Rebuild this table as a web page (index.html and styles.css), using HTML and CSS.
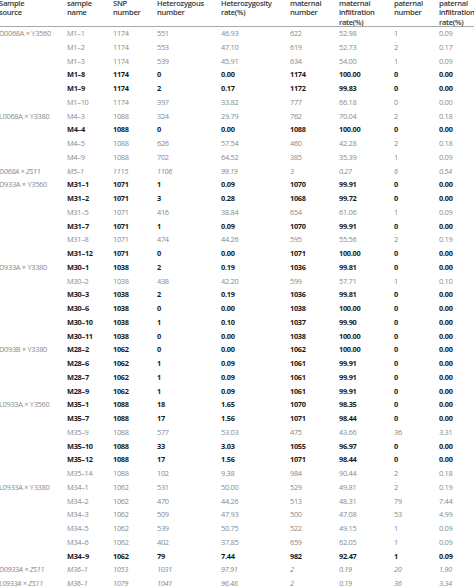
FILE: index.html
```html
<!DOCTYPE html>
<html>
<head>
<meta charset="utf-8">
<link rel="stylesheet" href="styles.css">
</head>
<body>
<div class="table">
  <div class="head">
    <div class="c1">Sample<br>source</div>
    <div>sample<br>name</div>
    <div>SNP<br>number</div>
    <div>Heterozygous<br>number</div>
    <div>Heterozygosity<br>rate(%)</div>
    <div>maternal<br>number</div>
    <div>maternal<br>infiltration<br>rate(%)</div>
    <div>paternal<br>number</div>
    <div>paternal<br>infiltration<br>rate(%)</div>
  </div>

  <div class="row"><div class="c1">D0068A × Y3560</div><div>M1–1</div><div>1174</div><div>551</div><div>46.93</div><div>622</div><div>52.98</div><div>1</div><div>0.09</div></div>
  <div class="row"><div class="c1"></div><div>M1–2</div><div>1174</div><div>553</div><div>47.10</div><div>619</div><div>52.73</div><div>2</div><div>0.17</div></div>
  <div class="row"><div class="c1"></div><div>M1–3</div><div>1174</div><div>539</div><div>45.91</div><div>634</div><div>54.00</div><div>1</div><div>0.09</div></div>
  <div class="row b"><div class="c1"></div><div>M1–8</div><div>1174</div><div>0</div><div>0.00</div><div>1174</div><div>100.00</div><div>0</div><div>0.00</div></div>
  <div class="row b"><div class="c1"></div><div>M1–9</div><div>1174</div><div>2</div><div>0.17</div><div>1172</div><div>99.83</div><div>0</div><div>0.00</div></div>
  <div class="row"><div class="c1"></div><div>M1–10</div><div>1174</div><div>397</div><div>33.82</div><div>777</div><div>66.18</div><div>0</div><div>0.00</div></div>
  <div class="row"><div class="c1">L0068A × Y3380</div><div>M4–3</div><div>1088</div><div>324</div><div>29.79</div><div>762</div><div>70.04</div><div>2</div><div>0.18</div></div>
  <div class="row b"><div class="c1"></div><div>M4–4</div><div>1088</div><div>0</div><div>0.00</div><div>1088</div><div>100.00</div><div>0</div><div>0.00</div></div>
  <div class="row"><div class="c1"></div><div>M4–5</div><div>1088</div><div>626</div><div>57.54</div><div>460</div><div>42.28</div><div>2</div><div>0.18</div></div>
  <div class="row"><div class="c1"></div><div>M4–9</div><div>1088</div><div>702</div><div>64.52</div><div>385</div><div>35.39</div><div>1</div><div>0.09</div></div>
  <div class="row i"><div class="c1">D068A × ZS11</div><div>M5–1</div><div>1115</div><div>1106</div><div>99.19</div><div>3</div><div>0.27</div><div>6</div><div>0.54</div></div>
  <div class="row b"><div class="c1">D933A × Y3560</div><div>M31–1</div><div>1071</div><div>1</div><div>0.09</div><div>1070</div><div>99.91</div><div>0</div><div>0.00</div></div>
  <div class="row b"><div class="c1"></div><div>M31–2</div><div>1071</div><div>3</div><div>0.28</div><div>1068</div><div>99.72</div><div>0</div><div>0.00</div></div>
  <div class="row"><div class="c1"></div><div>M31–5</div><div>1071</div><div>416</div><div>38.84</div><div>654</div><div>61.06</div><div>1</div><div>0.09</div></div>
  <div class="row b"><div class="c1"></div><div>M31–7</div><div>1071</div><div>1</div><div>0.09</div><div>1070</div><div>99.91</div><div>0</div><div>0.00</div></div>
  <div class="row"><div class="c1"></div><div>M31–8</div><div>1071</div><div>474</div><div>44.26</div><div>595</div><div>55.56</div><div>2</div><div>0.19</div></div>
  <div class="row b"><div class="c1"></div><div>M31–12</div><div>1071</div><div>0</div><div>0.00</div><div>1071</div><div>100.00</div><div>0</div><div>0.00</div></div>
  <div class="row b"><div class="c1">D933A × Y3380</div><div>M30–1</div><div>1038</div><div>2</div><div>0.19</div><div>1036</div><div>99.81</div><div>0</div><div>0.00</div></div>
  <div class="row"><div class="c1"></div><div>M30–2</div><div>1038</div><div>438</div><div>42.20</div><div>599</div><div>57.71</div><div>1</div><div>0.10</div></div>
  <div class="row b"><div class="c1"></div><div>M30–3</div><div>1038</div><div>2</div><div>0.19</div><div>1036</div><div>99.81</div><div>0</div><div>0.00</div></div>
  <div class="row b"><div class="c1"></div><div>M30–6</div><div>1038</div><div>0</div><div>0.00</div><div>1038</div><div>100.00</div><div>0</div><div>0.00</div></div>
  <div class="row b"><div class="c1"></div><div>M30–10</div><div>1038</div><div>1</div><div>0.10</div><div>1037</div><div>99.90</div><div>0</div><div>0.00</div></div>
  <div class="row b"><div class="c1"></div><div>M30–11</div><div>1038</div><div>0</div><div>0.00</div><div>1038</div><div>100.00</div><div>0</div><div>0.00</div></div>
  <div class="row b"><div class="c1">D093B × Y3380</div><div>M28–2</div><div>1062</div><div>0</div><div>0.00</div><div>1062</div><div>100.00</div><div>0</div><div>0.00</div></div>
  <div class="row b"><div class="c1"></div><div>M28–6</div><div>1062</div><div>1</div><div>0.09</div><div>1061</div><div>99.91</div><div>0</div><div>0.00</div></div>
  <div class="row b"><div class="c1"></div><div>M28–7</div><div>1062</div><div>1</div><div>0.09</div><div>1061</div><div>99.91</div><div>0</div><div>0.00</div></div>
  <div class="row b"><div class="c1"></div><div>M28–9</div><div>1062</div><div>1</div><div>0.09</div><div>1061</div><div>99.91</div><div>0</div><div>0.00</div></div>
  <div class="row b"><div class="c1">L0933A × Y3560</div><div>M35–1</div><div>1088</div><div>18</div><div>1.65</div><div>1070</div><div>98.35</div><div>0</div><div>0.00</div></div>
  <div class="row b"><div class="c1"></div><div>M35–7</div><div>1088</div><div>17</div><div>1.56</div><div>1071</div><div>98.44</div><div>0</div><div>0.00</div></div>
  <div class="row"><div class="c1"></div><div>M35–9</div><div>1088</div><div>577</div><div>53.03</div><div>475</div><div>43.66</div><div>36</div><div>3.31</div></div>
  <div class="row b"><div class="c1"></div><div>M35–10</div><div>1088</div><div>33</div><div>3.03</div><div>1055</div><div>96.97</div><div>0</div><div>0.00</div></div>
  <div class="row b"><div class="c1"></div><div>M35–12</div><div>1088</div><div>17</div><div>1.56</div><div>1071</div><div>98.44</div><div>0</div><div>0.00</div></div>
  <div class="row"><div class="c1"></div><div>M35–14</div><div>1088</div><div>102</div><div>9.38</div><div>984</div><div>90.44</div><div>2</div><div>0.18</div></div>
  <div class="row"><div class="c1">L0933A × Y3380</div><div>M34–1</div><div>1062</div><div>531</div><div>50.00</div><div>529</div><div>49.81</div><div>2</div><div>0.19</div></div>
  <div class="row"><div class="c1"></div><div>M34–2</div><div>1062</div><div>470</div><div>44.26</div><div>513</div><div>48.31</div><div>79</div><div>7.44</div></div>
  <div class="row"><div class="c1"></div><div>M34–3</div><div>1062</div><div>509</div><div>47.93</div><div>500</div><div>47.08</div><div>53</div><div>4.99</div></div>
  <div class="row"><div class="c1"></div><div>M34–5</div><div>1062</div><div>539</div><div>50.75</div><div>522</div><div>49.15</div><div>1</div><div>0.09</div></div>
  <div class="row"><div class="c1"></div><div>M34–6</div><div>1062</div><div>402</div><div>37.85</div><div>659</div><div>62.05</div><div>1</div><div>0.09</div></div>
  <div class="row b"><div class="c1"></div><div>M34–9</div><div>1062</div><div>79</div><div>7.44</div><div>982</div><div>92.47</div><div>1</div><div>0.09</div></div>
  <div class="row i"><div class="c1">D0933A × ZS11</div><div>M36–1</div><div>1053</div><div>1031</div><div>97.91</div><div>2</div><div>0.19</div><div>20</div><div>1.90</div></div>
  <div class="row i"><div class="c1">L0933A × ZS11</div><div>M36–1</div><div>1079</div><div>1041</div><div>96.48</div><div>2</div><div>0.19</div><div>36</div><div>3.34</div></div>
</div>
</body>
</html>
```

FILE: styles.css
```css
html, body {
  margin: 0;
  padding: 0;
  background: #ffffff;
}
body {
  width: 474px;
  height: 588px;
  overflow: hidden;
  font-family: "Open Sans", "Liberation Sans", sans-serif;
  font-size: 7.4px;
  letter-spacing: -0.3px;
  color: #8a8a8a;
}
.table {
  margin-left: -1px;
  margin-top: -1px;
  width: 540px;
}
.head,
.row {
  display: grid;
  grid-template-columns: 68px 46px 44px 64px 69px 49px 55px 45px 100px;
  white-space: nowrap;
}
.head {
  height: 27px;
  line-height: 9.3px;
  font-size: 7.6px;
  font-weight: 600;
  color: #383838;
  border-bottom: 1px solid #a8a8a8;
  align-items: start;
}
.row {
  height: 13.75px;
  line-height: 13.75px;
  align-items: center;
}
.row.b > div {
  font-weight: 700;
  color: #1a1a1a;
}
.row.i > div {
  font-style: italic;
}
.row > .c1,
.row.b > .c1 {
  font-weight: 400;
  font-style: normal;
  color: #8a8a8a;
}
```
